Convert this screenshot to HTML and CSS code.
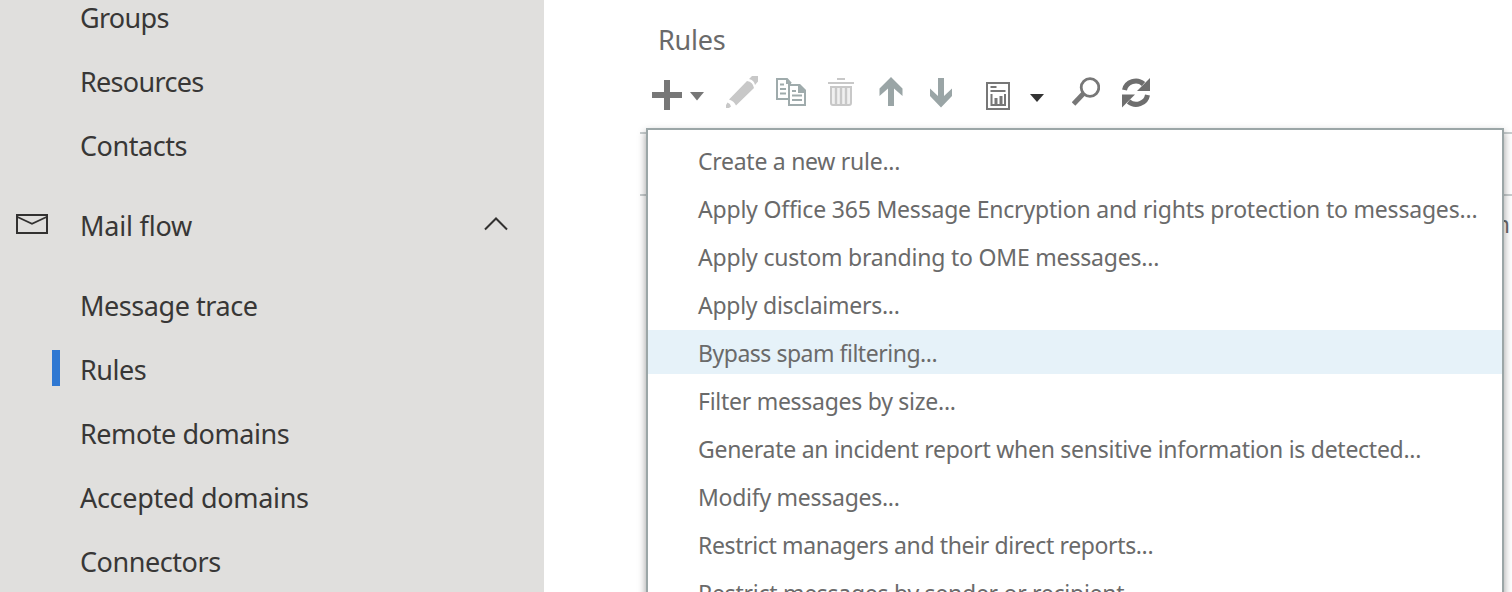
FILE: index.html
```html
<!DOCTYPE html>
<html lang="en">
<head>
    <meta charset="UTF-8">
    <meta name="viewport" content="width=device-width, initial-scale=1.0">
    <title>Rules</title>
    <link rel="stylesheet" href="styles.css">
</head>
<body>
    <div class="page">
        <nav class="sidebar">
            <a class="nav-item tight"><span>Groups</span></a>
            <a class="nav-item tight"><span>Resources</span></a>
            <a class="nav-item"><span>Contacts</span></a>
            <div class="nav-group">
                <svg class="mail-icon" width="32" height="20" viewBox="0 0 32 20" fill="none" stroke="#323130" stroke-width="2">
                    <rect x="1" y="1" width="30" height="18"/>
                    <path d="M1.500 3L16 9.800L30.500 3" stroke-width="1.800"/>
                </svg>
                <span class="nav-title">Mail flow</span>
                <svg class="chevron" width="26" height="16" viewBox="0 0 26 16" fill="none" stroke="#323130" stroke-width="2">
                    <path d="M2 13.500L13 2.500L24 13.500"/>
                </svg>
            </div>
            <a class="nav-item"><span>Message trace</span></a>
            <a class="nav-item active"><span>Rules</span></a>
            <a class="nav-item"><span>Remote domains</span></a>
            <a class="nav-item wide"><span>Accepted domains</span></a>
            <a class="nav-item"><span>Connectors</span></a>
        </nav>
        <main class="content">
            <h1>Rules</h1>
            <div class="toolbar">
                <!-- new -->
                <svg width="56" height="40" viewBox="0 0 56 40">
                    <path d="M12 4h6v12h12v6H18v12h-6V22H0v-6h12z" fill="#777"/>
                    <path d="M38 16h14l-7 8.500z" fill="#777"/>
                </svg>
                <!-- edit -->
                <svg class="edit" width="32" height="40" viewBox="0 0 32 40" fill="#c8c8c8">
                    <path d="M0 32v-3l1.500-2.500q3 1 3.500 4L3 32z"/>
                    <path d="M3 23.500L21 5Q27 6 28 12L10 29.500Q8 25 3 23.500z"/>
                    <path d="M23 3L26 0h6v5.500L29 9Q28 4 23 3z"/>
                </svg>
                <!-- copy -->
                <svg class="copy" width="32" height="40" viewBox="0 0 32 40" fill="none" stroke="#9fabac" stroke-width="2">
                    <path d="M12 23H1V3h10l4 4.500M11 3v4h4"/>
                    <path d="M4 8.500h4M4 13h6M4 17.500h6"/>
                    <path d="M13 9h10l6 6v14H13z" fill="#fff"/>
                    <path d="M22 8h2l6 6v3h-8z" fill="#9fabac" stroke="none"/>
                    <path d="M16 15h4M16 19.500h10M16 24h10"/>
                </svg>
                <!-- delete -->
                <svg class="delete" width="26" height="40" viewBox="0 0 26 40" fill="none" stroke="#c8c8c8" stroke-width="2">
                    <path d="M9 3h8M0 7h26"/>
                    <path d="M3 11h20v16q0 2-2 2H5q-2 0-2-2z" fill="#f0f0f0"/>
                    <path d="M8 11v18M13 11v18M18 11v18" stroke-width="2.400"/>
                </svg>
                <!-- move up -->
                <svg class="up" width="24" height="40" viewBox="0 0 24 40" fill="#9aa5a6">
                    <path d="M12 1l11.500 11.500V20L15 12.500V30H9V12.500L.5 20v-7.500z"/>
                </svg>
                <!-- move down -->
                <svg class="down" width="24" height="40" viewBox="0 0 24 40" fill="#9aa5a6">
                    <path d="M12 31.500L1 20v-7.500l8 7.500V2h6v18l8-7.500V20z"/>
                </svg>
                <!-- reports -->
                <svg class="report" width="60" height="40" viewBox="0 0 60 40">
                    <rect x="2" y="7" width="22" height="26" fill="#fff" stroke="#777" stroke-width="2"/>
                    <path d="M5.500 11h6M5.500 15h15M6.500 18v11H20V18" fill="none" stroke="#777" stroke-width="2"/>
                    <path d="M9.500 22h3v6h-3zM14.500 20h3v8h-3z" fill="#777"/>
                    <path d="M45 18h14l-7 8z" fill="#333"/>
                </svg>
                <!-- search -->
                <svg class="search" width="28" height="40" viewBox="0 0 28 40" fill="none" stroke="#777">
                    <circle cx="18" cy="11.500" r="8.800" stroke-width="2.800"/>
                    <path d="M11.500 17.500L1.500 28" stroke-width="5"/>
                </svg>
                <!-- refresh -->
                <svg class="refresh" width="30" height="40" viewBox="0 0 30 40">
                    <path d="M3.500 14A11.500 11 0 0 1 22.500 8" fill="none" stroke="#6e6e6e" stroke-width="5"/>
                    <path d="M29 2v13H16z" fill="#6e6e6e"/>
                    <path d="M26.500 19A11.500 11 0 0 1 7.500 25.500" fill="none" stroke="#6e6e6e" stroke-width="5"/>
                    <path d="M1 31.500V18.500h13z" fill="#6e6e6e"/>
                </svg>
            </div>
            <div class="grid">
                <div class="grid-head"></div>
                <div class="grid-row">n</div>
            </div>
            <ul class="menu">
                <li>Create a new rule...</li>
                <li class="wide">Apply Office 365 Message Encryption and rights protection to messages...</li>
                <li class="wide">Apply custom branding to OME messages...</li>
                <li>Apply disclaimers...</li>
                <li class="tight selected">Bypass spam filtering...</li>
                <li>Filter messages by size...</li>
                <li>Generate an incident report when sensitive information is detected...</li>
                <li>Modify messages...</li>
                <li class="tight">Restrict managers and their direct reports...</li>
                <li>Restrict messages by sender or recipient...</li>
            </ul>
        </main>
    </div>
</body>
</html>
```
FILE: styles.css
```css
* {
    margin: 0;
    padding: 0;
    box-sizing: border-box;
}
body {
    font-family: 'Noto Sans', 'Open Sans', sans-serif;
    background-color: #fff;
    color: #383736;
    overflow: hidden;
}
.page {
    display: flex;
    height: 592px;
    overflow: hidden;
}
.sidebar {
    width: 544px;
    flex: none;
    background-color: #e0dfdd;
    font-size: 27px;
    letter-spacing: -0.45px;
}
.sidebar .tight {
    letter-spacing: -0.7px;
}
.sidebar .wide {
    letter-spacing: -0.3px;
}
.nav-item {
    display: flex;
    align-items: center;
    height: 64px;
    padding: 0 0 2px 80px;
}
.nav-item:first-child {
    margin-top: -14px;
}
.nav-item.active {
    padding-left: 52px;
}
.nav-item.active::before {
    content: "";
    width: 8px;
    height: 36px;
    margin: -2px 20px 0 0;
    background-color: #2f78d2;
}
.nav-group {
    display: flex;
    align-items: center;
    height: 96px;
    padding: 0 35px 0 16px;
}
.mail-icon {
    margin: -4px 32px 0 0;
}
.nav-title {
    flex: 1;
    margin-top: -2px;
    letter-spacing: -0.2px;
}
.chevron {
    margin-top: -5px;
}
.content {
    position: relative;
    flex: 1;
    padding-left: 96px;
    color: #6a6a6a;
}
h1 {
    height: 74px;
    padding: 20px 0 0 18px;
    font-size: 27px;
    font-weight: normal;
    line-height: 40px;
    letter-spacing: -0.2px;
}
.toolbar {
    display: flex;
    height: 58px;
    padding: 2px 0 0 12px;
}
.edit {
    margin-left: 18px;
}
.copy {
    margin-left: 18px;
}
.delete {
    margin-left: 20px;
}
.up {
    margin-left: 25px;
}
.down {
    margin-left: 26px;
}
.report {
    margin-left: 32px;
}
.search {
    margin-left: 27px;
}
.refresh {
    margin-left: 21px;
}
.grid {
    border-top: 2px solid #c8cecf;
}
.grid-head {
    height: 62px;
    border-bottom: 2px solid #c8cecf;
}
.grid-row {
    padding: 11px 2px 0 0;
    font-size: 23px;
    line-height: 34px;
    text-align: right;
}
.menu {
    position: absolute;
    left: 102px;
    top: 128px;
    width: 858px;
    height: 500px;
    padding-top: 8px;
    border: 2px solid #9ba6a7;
    background-color: #fff;
    box-shadow: 0 4px 8px rgba(0, 0, 0, 0.4);
    list-style: none;
    font-size: 23px;
    letter-spacing: -0.27px;
}
.menu li {
    height: 44px;
    margin-bottom: 4px;
    padding-left: 50px;
    line-height: 46px;
    white-space: nowrap;
}
.menu .wide {
    letter-spacing: -0.2px;
}
.menu .tight {
    letter-spacing: -0.36px;
}
.menu .selected {
    background-color: #e6f2f9;
    letter-spacing: -0.48px;
}
```
